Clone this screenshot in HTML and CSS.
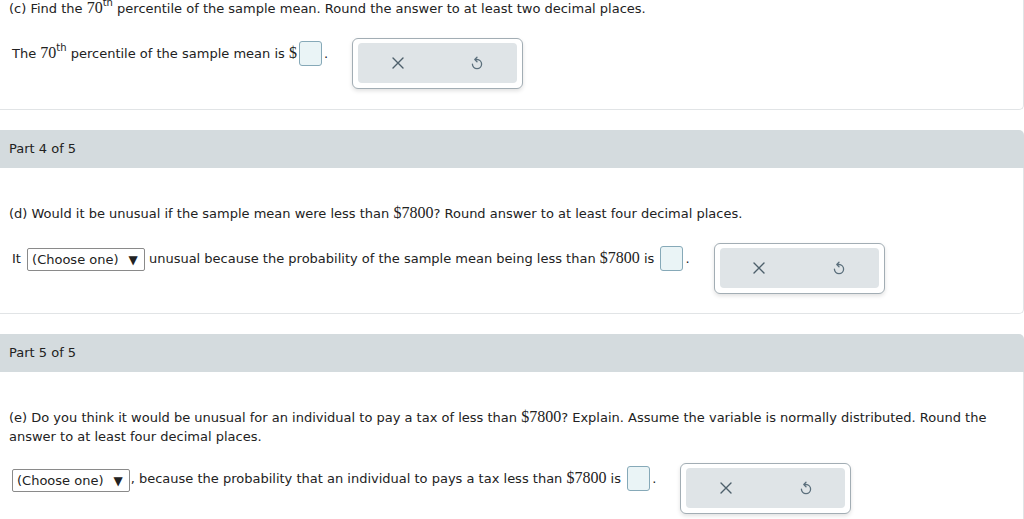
FILE: index.html
```html
<!DOCTYPE html>
<html lang="en">
<head>
<meta charset="utf-8">
<title>Sample mean</title>
<link rel="stylesheet" href="styles.css">
</head>
<body>
<div class="page">
  <section class="card card-first">
    <p class="question">(c) Find the <span class="m">70</span><sup class="sup">th</sup> percentile of the sample mean. Round the answer to at least two decimal places.</p>
    <div class="answer-row">
      <div class="statement">The <span class="m">70</span><sup class="sup">th</sup> percentile of the sample mean is <span class="m">$</span><span class="box"></span>.</div>
      <div class="tools">
        <div class="tools-inner">
          <button class="tool" type="button" aria-label="Clear">
            <svg width="12" height="12" viewBox="0 0 12 12"><path d="M1 1 L11 11 M11 1 L1 11" stroke="#4d5f6b" stroke-width="1.4" fill="none" stroke-linecap="round"/></svg>
          </button>
          <button class="tool" type="button" aria-label="Undo">
            <svg width="12" height="14" viewBox="0 0 12 14"><path d="M4.5 3.5 H6 A4.6 4.6 0 1 1 1.4 8.1" stroke="#5b6f7c" stroke-width="1.3" fill="none" stroke-linecap="round"/><path d="M6 1.3 L3.8 3.5 L6 5.7" stroke="#5b6f7c" stroke-width="1.3" fill="none" stroke-linecap="round" stroke-linejoin="round"/></svg>
          </button>
        </div>
      </div>
    </div>
  </section>

  <div class="part-head">Part 4 of 5</div>
  <section class="card card-mid">
    <p class="question">(d) Would it be unusual if the sample mean were less than <span class="m">$7800</span>? Round answer to at least four decimal places.</p>
    <div class="answer-row">
      <div class="statement">It <span class="select select-inline">(Choose one)<span class="arrow">▼</span></span> unusual because the probability of the sample mean being less than <span class="m">$7800</span> is <span class="box"></span>.</div>
      <div class="tools">
        <div class="tools-inner">
          <button class="tool" type="button" aria-label="Clear">
            <svg width="12" height="12" viewBox="0 0 12 12"><path d="M1 1 L11 11 M11 1 L1 11" stroke="#4d5f6b" stroke-width="1.4" fill="none" stroke-linecap="round"/></svg>
          </button>
          <button class="tool" type="button" aria-label="Undo">
            <svg width="12" height="14" viewBox="0 0 12 14"><path d="M4.5 3.5 H6 A4.6 4.6 0 1 1 1.4 8.1" stroke="#5b6f7c" stroke-width="1.3" fill="none" stroke-linecap="round"/><path d="M6 1.3 L3.8 3.5 L6 5.7" stroke="#5b6f7c" stroke-width="1.3" fill="none" stroke-linecap="round" stroke-linejoin="round"/></svg>
          </button>
        </div>
      </div>
    </div>
  </section>

  <div class="part-head">Part 5 of 5</div>
  <section class="card card-last">
    <p class="question">(e) Do you think it would be unusual for an individual to pay a tax of less than <span class="m">$7800</span>? Explain. Assume the variable is normally distributed. Round the answer to at least four decimal places.</p>
    <div class="answer-row answer-row-tight">
      <div class="statement"><span class="select select-lead">(Choose one)<span class="arrow">▼</span></span>, because the probability that an individual to pays a tax less than <span class="m">$7800</span> is <span class="box"></span>.</div>
      <div class="tools">
        <div class="tools-inner">
          <button class="tool" type="button" aria-label="Clear">
            <svg width="12" height="12" viewBox="0 0 12 12"><path d="M1 1 L11 11 M11 1 L1 11" stroke="#4d5f6b" stroke-width="1.4" fill="none" stroke-linecap="round"/></svg>
          </button>
          <button class="tool" type="button" aria-label="Undo">
            <svg width="12" height="14" viewBox="0 0 12 14"><path d="M4.5 3.5 H6 A4.6 4.6 0 1 1 1.4 8.1" stroke="#5b6f7c" stroke-width="1.3" fill="none" stroke-linecap="round"/><path d="M6 1.3 L3.8 3.5 L6 5.7" stroke="#5b6f7c" stroke-width="1.3" fill="none" stroke-linecap="round" stroke-linejoin="round"/></svg>
          </button>
        </div>
      </div>
    </div>
  </section>
</div>
</body>
</html>
```

FILE: styles.css
```css
html, body {
  margin: 0;
  padding: 0;
  background: #ffffff;
}
body {
  font-family: "DejaVu Sans", Verdana, sans-serif;
  font-size: 13px;
  color: #222222;
  overflow: hidden;
}
.page {
  width: 1024px;
}
.card {
  border-right: 1px solid #e1e4e6;
  border-bottom: 1px solid #e1e4e6;
  border-bottom-right-radius: 5px;
  padding: 36px 20px 20px 9px;
  margin-bottom: 20px;
}
.card-first {
  padding-top: 0;
  margin-top: -1px;
}
.card-mid {
  padding-bottom: 19px;
}
.question {
  margin: 0;
  line-height: 19px;
  width: 990px;
}
.m {
  font-family: "Liberation Serif", "Times New Roman", serif;
  font-size: 16px;
  line-height: 1;
}
.sup {
  font-size: 10px;
  line-height: 0;
  vertical-align: 7px;
}
.answer-row {
  display: flex;
  align-items: flex-start;
  gap: 24px;
  margin-top: 20px;
  padding-left: 3px;
}
.answer-row-tight {
  margin-top: 17px;
}
.statement {
  padding-top: 3px;
  height: 25px;
  line-height: 25px;
  white-space: nowrap;
}
.box {
  display: inline-block;
  box-sizing: border-box;
  width: 23px;
  height: 25px;
  border: 1px solid #86a9b8;
  border-radius: 3px;
  background: #eaf4f6;
  vertical-align: top;
  margin: 0 2px 0 2px;
}
.select {
  display: inline-block;
  box-sizing: border-box;
  height: 23px;
  line-height: 21px;
  border: 1px solid #8a8a8a;
  border-radius: 2px;
  padding: 0 6px 0 4px;
  vertical-align: top;
  position: relative;
  top: 2px;
}
.select-inline {
  margin-left: 2px;
}
.select-lead {
  margin-right: 1px;
  top: 3px;
}
.arrow {
  font-size: 12px;
  margin-left: 10px;
}
.tools {
  width: 159px;
  height: 41px;
  padding: 4px 5px 4px 5px;
  border: 1px solid #a2adb4;
  border-radius: 6px;
  background: #ffffff;
  box-shadow: 0 2px 4px rgba(0, 0, 0, 0.12);
}
.tools-inner {
  display: flex;
  height: 40px;
  background: #dfe4e7;
  border-radius: 4px;
}
.tool {
  flex: 1;
  display: flex;
  align-items: center;
  justify-content: center;
  border: none;
  background: transparent;
  padding: 0;
  margin: 0;
}
.part-head {
  height: 38px;
  line-height: 38px;
  background: #d4dbde;
  border-top-right-radius: 5px;
  padding-left: 9px;
}
```
